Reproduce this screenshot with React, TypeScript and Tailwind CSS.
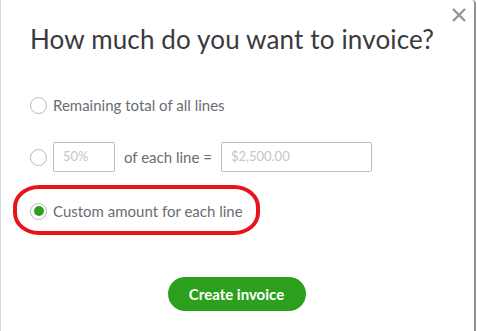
import React from "react";

function Radio({ checked }: { checked?: boolean }) {
  return (
    <span className="w-[17px] h-[17px] rounded-full border border-[#b5b8bd] bg-white flex items-center justify-center shrink-0">
      {checked && <span className="w-[10px] h-[10px] rounded-full bg-[#2ca01c]" />}
    </span>
  );
}

export default function App() {
  return (
    <div className="w-[478px] h-[331px] bg-white overflow-hidden" style={{ fontFamily: "Lato, 'Open Sans', sans-serif" }}>
      <div className="relative w-[476px] h-[331px] border-l border-l-[#d6d9de] border-r-2 border-r-[#8f9095] rounded-tr-[4px] bg-white">
        <button className="absolute right-[7px] top-[7px] text-[#8d9096]">
          <svg width="16" height="16" viewBox="0 0 16 16" fill="none" stroke="currentColor" strokeWidth="2.2">
            <path d="M2 2 L14 14 M14 2 L2 14" />
          </svg>
        </button>
        <div className="pl-[29px] pt-[23px]">
          <h1 className="text-[26px] leading-[32px] text-[#393a3d] tracking-[0.15px]">How much do you want to invoice?</h1>
          <div className="mt-[38px] flex flex-col">
            <label className="flex items-center gap-[6px] h-[24px]">
              <Radio />
              <span className="text-[15px] text-[#6b6c72]">Remaining total of all lines</span>
            </label>
            <div className="mt-[25px] flex items-center h-[30px]">
              <Radio />
              <div className="ml-[6px] w-[62px] h-[30px] border border-[#babec5] rounded-[2px] flex items-center pl-[9px] text-[13px] text-[#c3c6cb]">50%</div>
              <span className="ml-[9px] text-[15px] text-[#6b6c72]">of each line =</span>
              <div className="ml-[9px] w-[151px] h-[30px] border border-[#babec5] rounded-[2px] flex items-center pl-[9px] text-[13px] text-[#c3c6cb]">$2,500.00</div>
            </div>
            <label className="mt-[27px] flex items-center gap-[6px] h-[24px] relative">
              <Radio checked />
              <span className="text-[15px] text-[#6b6c72]">Custom amount for each line</span>
              <span className="absolute left-[-17px] top-[-14px] w-[247px] h-[50px] border-[4px] border-[#e8141c] rounded-[26px/22px] pointer-events-none" />
            </label>
          </div>
        </div>
        <div className="mt-[54px] flex justify-center">
          <button className="ml-[-2px] w-[138px] h-[34px] rounded-full bg-[#2ca01c] text-white text-[15px] font-bold">Create invoice</button>
        </div>
      </div>
    </div>
  );
}
